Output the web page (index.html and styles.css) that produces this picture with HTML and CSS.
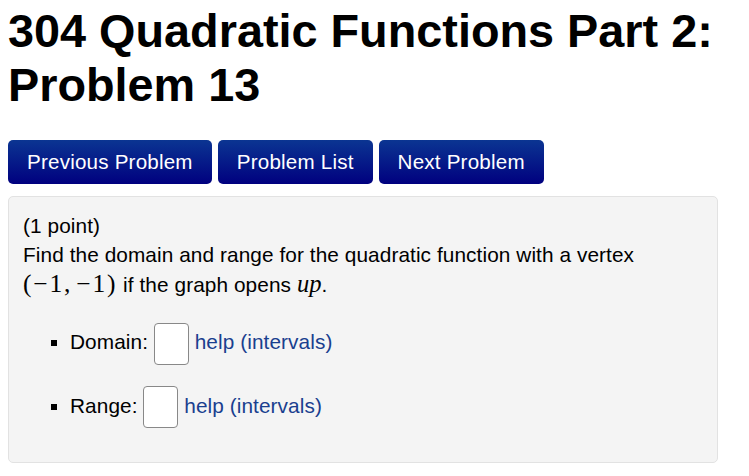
FILE: index.html
```html
<!DOCTYPE html>
<html lang="en">
<head>
  <meta charset="UTF-8" />
  <meta name="viewport" content="width=device-width, initial-scale=1.0"/>
  <title>304 Quadratic Functions Part 2: Problem 13</title>
  <link rel="stylesheet" href="styles.css">
</head>
<body>

  <h1 class="problem-title">304 Quadratic Functions Part 2: Problem 13</h1>

  <nav class="problem-nav">
    <a class="btn" href="#">Previous Problem</a>
    <a class="btn" href="#">Problem List</a>
    <a class="btn" href="#">Next Problem</a>
  </nav>

  <div class="problem">
    <div class="problem-text">
      (1 point)<br>
      Find the domain and range for the quadratic function with a vertex
      <span class="math vertex">(&minus;1,<span class="thin"></span>&minus;1)</span> if the graph opens <span class="math var">up</span>.
    </div>

    <ul class="answers">
      <li>
        Domain: <input type="text" class="answer-box"> <a class="help" href="#">help (intervals)</a>
      </li>
      <li>
        Range: <input type="text" class="answer-box"> <a class="help" href="#">help (intervals)</a>
      </li>
    </ul>
  </div>

</body>
</html>
```

FILE: styles.css
```css
body {
  font-family: "Liberation Sans", Arial, sans-serif;
  font-size: 20.8px;
  color: #000;
  background: #fff;
  margin: 0;
  padding: 4px 31px 0 8px;
}

.problem-title {
  font-size: 46.8px;
  font-weight: bold;
  line-height: normal;
  margin: 0 0 28px;
}

.problem-nav {
  display: flex;
  gap: 6px;
}

.btn {
  display: inline-flex;
  align-items: center;
  height: 44px;
  padding: 0 19px;
  border-radius: 5px;
  background: linear-gradient(#0b3592, #00007f);
  color: #fff;
  font-size: 20.6px;
  letter-spacing: 0.2px;
  text-decoration: none;
}

.problem {
  margin-top: 12px;
  background: #f4f4f4;
  border: 1px solid #e2e2e2;
  border-radius: 5px;
  padding: 14px 14px 0;
  height: 251px;
  letter-spacing: 0.08px;
}

.problem-text {
  line-height: 29px;
}

.math {
  font-family: "Liberation Serif", "DejaVu Serif", serif;
  font-size: 24.5px;
  letter-spacing: 0;
  white-space: nowrap;
}

.vertex {
  font-size: 25.5px;
  letter-spacing: 1.8px;
}

.math .thin {
  display: inline-block;
  width: 4px;
}

.var {
  font-style: italic;
}

.answers {
  list-style: square;
  margin: 22px 0 0;
  padding-left: 47px;
}

.answers li {
  line-height: 42px;
  margin-bottom: 20px;
}

.answer-box {
  box-sizing: border-box;
  width: 35px;
  height: 42px;
  margin: 0;
  padding: 0;
  border: 1px solid #888;
  border-radius: 4px;
  background: #fff;
  vertical-align: middle;
}

.help {
  color: #1a3f8f;
  text-decoration: none;
}
```
